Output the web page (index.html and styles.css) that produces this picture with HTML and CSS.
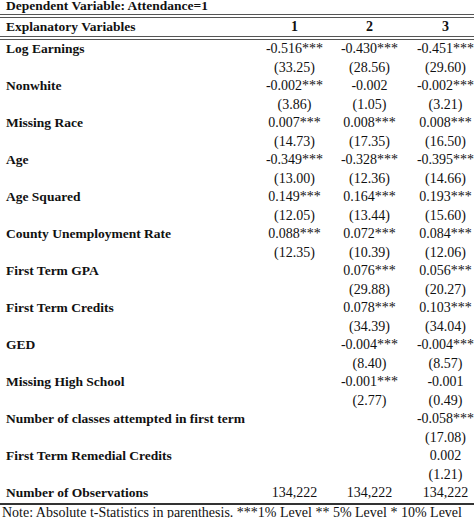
FILE: index.html
```html
<!DOCTYPE html>
<html>
<head>
<meta charset="utf-8">
<link rel="stylesheet" href="styles.css">
</head>
<body>
<div class="page">
  <div class="title">Dependent Variable: Attendance=1</div>
  <table class="reg">
    <colgroup>
      <col class="c-label"><col class="c-num"><col class="c-num"><col class="c-num">
    </colgroup>
    <thead>
      <tr><th class="lab">Explanatory Variables</th><th>1</th><th>2</th><th>3</th></tr>
    </thead>
    <tbody>
      <tr><td class="lab">Log Earnings</td><td>-0.516***</td><td>-0.430***</td><td>-0.451***</td></tr>
      <tr><td class="lab"></td><td>(33.25)</td><td>(28.56)</td><td>(29.60)</td></tr>
      <tr><td class="lab">Nonwhite</td><td>-0.002***</td><td>-0.002</td><td>-0.002***</td></tr>
      <tr><td class="lab"></td><td>(3.86)</td><td>(1.05)</td><td>(3.21)</td></tr>
      <tr><td class="lab">Missing Race</td><td>0.007***</td><td>0.008***</td><td>0.008***</td></tr>
      <tr><td class="lab"></td><td>(14.73)</td><td>(17.35)</td><td>(16.50)</td></tr>
      <tr><td class="lab">Age</td><td>-0.349***</td><td>-0.328***</td><td>-0.395***</td></tr>
      <tr><td class="lab"></td><td>(13.00)</td><td>(12.36)</td><td>(14.66)</td></tr>
      <tr><td class="lab">Age Squared</td><td>0.149***</td><td>0.164***</td><td>0.193***</td></tr>
      <tr><td class="lab"></td><td>(12.05)</td><td>(13.44)</td><td>(15.60)</td></tr>
      <tr><td class="lab">County Unemployment Rate</td><td>0.088***</td><td>0.072***</td><td>0.084***</td></tr>
      <tr><td class="lab"></td><td>(12.35)</td><td>(10.39)</td><td>(12.06)</td></tr>
      <tr><td class="lab">First Term GPA</td><td></td><td>0.076***</td><td>0.056***</td></tr>
      <tr><td class="lab"></td><td></td><td>(29.88)</td><td>(20.27)</td></tr>
      <tr><td class="lab">First Term Credits</td><td></td><td>0.078***</td><td>0.103***</td></tr>
      <tr><td class="lab"></td><td></td><td>(34.39)</td><td>(34.04)</td></tr>
      <tr><td class="lab">GED</td><td></td><td>-0.004***</td><td>-0.004***</td></tr>
      <tr><td class="lab"></td><td></td><td>(8.40)</td><td>(8.57)</td></tr>
      <tr><td class="lab">Missing High School</td><td></td><td>-0.001***</td><td>-0.001</td></tr>
      <tr><td class="lab"></td><td></td><td>(2.77)</td><td>(0.49)</td></tr>
      <tr><td class="lab">Number of classes attempted in first term</td><td></td><td></td><td>-0.058***</td></tr>
      <tr><td class="lab"></td><td></td><td></td><td>(17.08)</td></tr>
      <tr><td class="lab">First Term Remedial Credits</td><td></td><td></td><td>0.002</td></tr>
      <tr><td class="lab"></td><td></td><td></td><td>(1.21)</td></tr>
      <tr class="last"><td class="lab">Number of Observations</td><td>134,222</td><td>134,222</td><td>134,222</td></tr>
    </tbody>
  </table>
  <div class="note">Note: Absolute t-Statistics in parenthesis. ***1% Level ** 5% Level * 10% Level</div>
</div>
</body>
</html>
```
FILE: styles.css
```css
html, body {
  margin: 0;
  padding: 0;
  background: #fff;
  overflow: hidden;
}
.page {
  width: 474px;
  height: 518px;
  overflow: hidden;
  font-family: "Liberation Serif", "Times New Roman", serif;
  color: #111;
}
.title {
  font-weight: bold;
  font-size: 13.5px;
  line-height: 18px;
  margin-top: -3px;
  padding-left: 6px;
  height: 17px;
}
.reg {
  border-collapse: collapse;
  table-layout: fixed;
  width: 484px;
}
.c-label { width: 257px; }
.c-num { width: 75px; }
.c-num:last-child { width: 77px; }
.reg th, .reg td {
  padding: 0;
  height: 18.5px;
  line-height: 18.5px;
  font-size: 14px;
  text-align: center;
  white-space: nowrap;
}
.reg thead th {
  border-top: 4px double #555;
  border-bottom: 4px double #555;
  height: 18px;
  line-height: 18px;
  font-weight: bold;
}
.reg .lab {
  text-align: left;
  padding-left: 6px;
  font-weight: bold;
  font-size: 13.5px;
  overflow: visible;
}
.reg td { font-weight: normal; }
.reg td.lab { font-weight: bold; }
.reg tr.last td {
  border-bottom: 2px solid #333;
}
.note {
  font-size: 14px;
  line-height: 15px;
  padding-left: 2px;
  white-space: nowrap;
}
```
